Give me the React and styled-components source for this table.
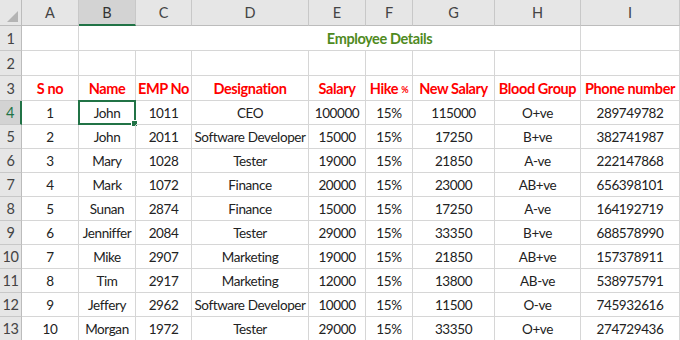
import React from 'react';
import styled, { createGlobalStyle } from 'styled-components';

const GlobalStyle = createGlobalStyle`
  html, body {
    margin: 0;
    padding: 0;
    background: #ffffff;
    overflow: hidden;
  }
  body {
    font-family: Lato, "Open Sans", sans-serif;
  }
`;

const COLS = ['A', 'B', 'C', 'D', 'E', 'F', 'G', 'H', 'I'];
const SELECTED_COL = 'B';
const SELECTED_ROW = 4;

const HEADINGS = ['S no', 'Name', 'EMP No', 'Designation', 'Salary', 'Hike', 'New Salary', 'Blood Group', 'Phone number'];

const employees = [
  [1, 'John', 1011, 'CEO', 100000, '15%', 115000, 'O+ve', 289749782],
  [2, 'John', 2011, 'Software Developer', 15000, '15%', 17250, 'B+ve', 382741987],
  [3, 'Mary', 1028, 'Tester', 19000, '15%', 21850, 'A-ve', 222147868],
  [4, 'Mark', 1072, 'Finance', 20000, '15%', 23000, 'AB+ve', 656398101],
  [5, 'Sunan', 2874, 'Finance', 15000, '15%', 17250, 'A-ve', 164192719],
  [6, 'Jenniffer', 2084, 'Tester', 29000, '15%', 33350, 'B+ve', 688578990],
  [7, 'Mike', 2907, 'Marketing', 19000, '15%', 21850, 'AB+ve', 157378911],
  [8, 'Tim', 2917, 'Marketing', 12000, '15%', 13800, 'AB-ve', 538975791],
  [9, 'Jeffery', 2962, 'Software Developer', 10000, '15%', 11500, 'O-ve', 745932616],
  [10, 'Morgan', 1972, 'Tester', 29000, '15%', 33350, 'O+ve', 274729436],
];

const Sheet = styled.div`
  display: grid;
  grid-template-columns: 22px 57px 57px 56px 117px 57px 47px 82px 86px 99px;
  grid-template-rows: 26px 25px 25px 25px repeat(10, 24px);
  width: 680px;
  height: 340px;
  overflow: hidden;
  background: #fff;
`;

const Corner = styled.div`
  position: relative;
  background: #e6e6e6;
  border-right: 1px solid #bcbcbc;
  border-bottom: 1px solid #bcbcbc;
  box-sizing: border-box;

  &::after {
    content: '';
    position: absolute;
    right: 3px;
    bottom: 3px;
    width: 0;
    height: 0;
    border-left: 11px solid transparent;
    border-bottom: 11px solid #b4b4b4;
  }
`;

const ColHeader = styled.div`
  display: flex;
  align-items: center;
  justify-content: center;
  box-sizing: border-box;
  background: ${p => (p.$active ? '#d3d3d3' : '#e6e6e6')};
  border-right: 1px solid #c8c8c8;
  border-bottom: ${p => (p.$active ? '2px solid #217346' : '1px solid #bcbcbc')};
  color: ${p => (p.$active ? '#333' : '#444')};
  font-size: 14.5px;
  padding-top: ${p => (p.$active ? '1px' : '0')};
`;

const RowHeader = styled.div`
  display: flex;
  align-items: center;
  justify-content: center;
  box-sizing: border-box;
  background: ${p => (p.$active ? '#d3d3d3' : '#e6e6e6')};
  border-right: ${p => (p.$active ? '2px solid #217346' : '1px solid #bcbcbc')};
  border-bottom: 1px solid #c8c8c8;
  color: ${p => (p.$active ? '#217346' : '#444')};
  font-size: 14.5px;
  letter-spacing: -0.3px;
`;

const Cell = styled.div`
  position: relative;
  display: flex;
  align-items: center;
  justify-content: center;
  box-sizing: border-box;
  border-right: 1px solid #d6d6d6;
  border-bottom: 1px solid #d6d6d6;
  grid-column: ${p => p.$span || 'auto'};
  color: #222;
  font-size: 13.5px;
  letter-spacing: -0.4px;
  white-space: nowrap;
`;

const TitleCell = styled(Cell)`
  padding-left: 100px;
  color: #4f8a1e;
  font-weight: 700;
  font-size: 14.5px;
`;

const HeadCell = styled(Cell)`
  color: #ff0000;
  font-weight: 700;
  font-size: 14.5px;
`;

const Percent = styled.span`
  font-size: 9px;
  margin-left: 3px;
  align-self: center;
  padding-top: 3px;
`;

const Selection = styled.div`
  position: absolute;
  left: -1px;
  top: -1px;
  right: -1px;
  bottom: -1px;
  border: 2px solid #217346;
  pointer-events: none;

  &::after {
    content: '';
    position: absolute;
    right: -4px;
    bottom: -4px;
    width: 5px;
    height: 5px;
    background: #217346;
    border: 1px solid #fff;
  }
`;

export default function App() {
  return (
    <>
      <GlobalStyle />
      <Sheet>
        <Corner />
        {COLS.map(c => (
          <ColHeader key={c} $active={c === SELECTED_COL}>{c}</ColHeader>
        ))}

        <RowHeader>1</RowHeader>
        <Cell />
        <TitleCell $span="span 7">Employee Details</TitleCell>
        <Cell />

        <RowHeader>2</RowHeader>
        {COLS.map(c => <Cell key={c} />)}

        <RowHeader>3</RowHeader>
        {HEADINGS.map(h => (
          <HeadCell key={h}>
            {h}
            {h === 'Hike' && <Percent>%</Percent>}
          </HeadCell>
        ))}

        {employees.map((row, i) => {
          const rowNo = i + 4;
          return (
            <React.Fragment key={rowNo}>
              <RowHeader $active={rowNo === SELECTED_ROW}>{rowNo}</RowHeader>
              {row.map((v, j) => (
                <Cell key={j}>
                  {v}
                  {rowNo === SELECTED_ROW && COLS[j] === SELECTED_COL && <Selection />}
                </Cell>
              ))}
            </React.Fragment>
          );
        })}
      </Sheet>
    </>
  );
}
